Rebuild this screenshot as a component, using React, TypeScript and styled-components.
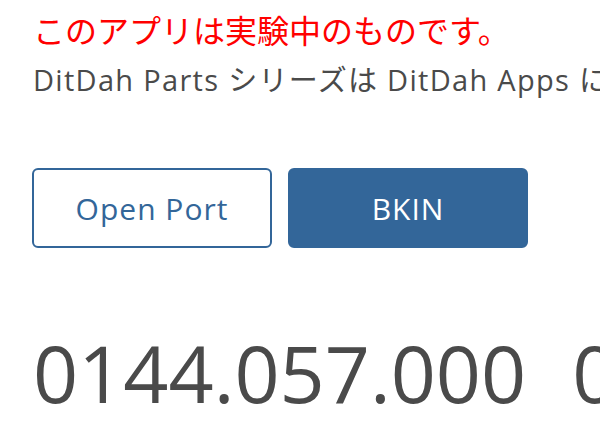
import React from 'react'
import styled, { createGlobalStyle } from 'styled-components'

const GlobalStyle = createGlobalStyle`
  html, body {
    margin: 0;
    padding: 0;
    overflow: hidden;
    background: #ffffff;
  }
  body {
    font-family: "Open Sans", "Noto Sans CJK JP", sans-serif;
    color: #4a4a4a;
  }
`

const Page = styled.main`
  display: flex;
  flex-direction: column;
  padding: 6px 0 0 32px;
  width: 900px;
`

const Notice = styled.p`
  margin: 0 0 0 1px;
  color: #ff0000;
  font-family: "Noto Sans CJK JP", sans-serif;
  font-size: 32px;
  line-height: 46px;
  white-space: nowrap;
`

const Intro = styled.p`
  margin: 5px 0 0 1px;
  font-size: 29px;
  letter-spacing: 1.3px;
  line-height: 46px;
  white-space: nowrap;
`

const ButtonRow = styled.div`
  display: flex;
  gap: 16px;
  margin-top: 65px;
`

const Button = styled.button<{ $primary?: boolean }>`
  width: 240px;
  height: 80px;
  border: 2px solid #336699;
  border-radius: 6px;
  background: ${({ $primary }) => ($primary ? '#336699' : '#ffffff')};
  color: ${({ $primary }) => ($primary ? '#ffffff' : '#336699')};
  font-family: "Open Sans", sans-serif;
  font-size: 30px;
  letter-spacing: 1px;
  cursor: pointer;
`

const FreqRow = styled.div`
  display: flex;
  gap: 46px;
  margin-top: 85px;
  margin-left: 1px;
  white-space: nowrap;
`

const Freq = styled.span`
  font-size: 79px;
  line-height: 1;
  color: #4a4a4a;
`

export default function App() {
  return (
    <Page>
      <GlobalStyle />
      <Notice>このアプリは実験中のものです。</Notice>
      <Intro>DitDah Parts シリーズは DitDah Apps に組み込まれる部品です。</Intro>
      <ButtonRow>
        <Button>Open Port</Button>
        <Button $primary>BKIN</Button>
      </ButtonRow>
      <FreqRow>
        <Freq>0144.057.000</Freq>
        <Freq>0144.057.000</Freq>
      </FreqRow>
    </Page>
  )
}
